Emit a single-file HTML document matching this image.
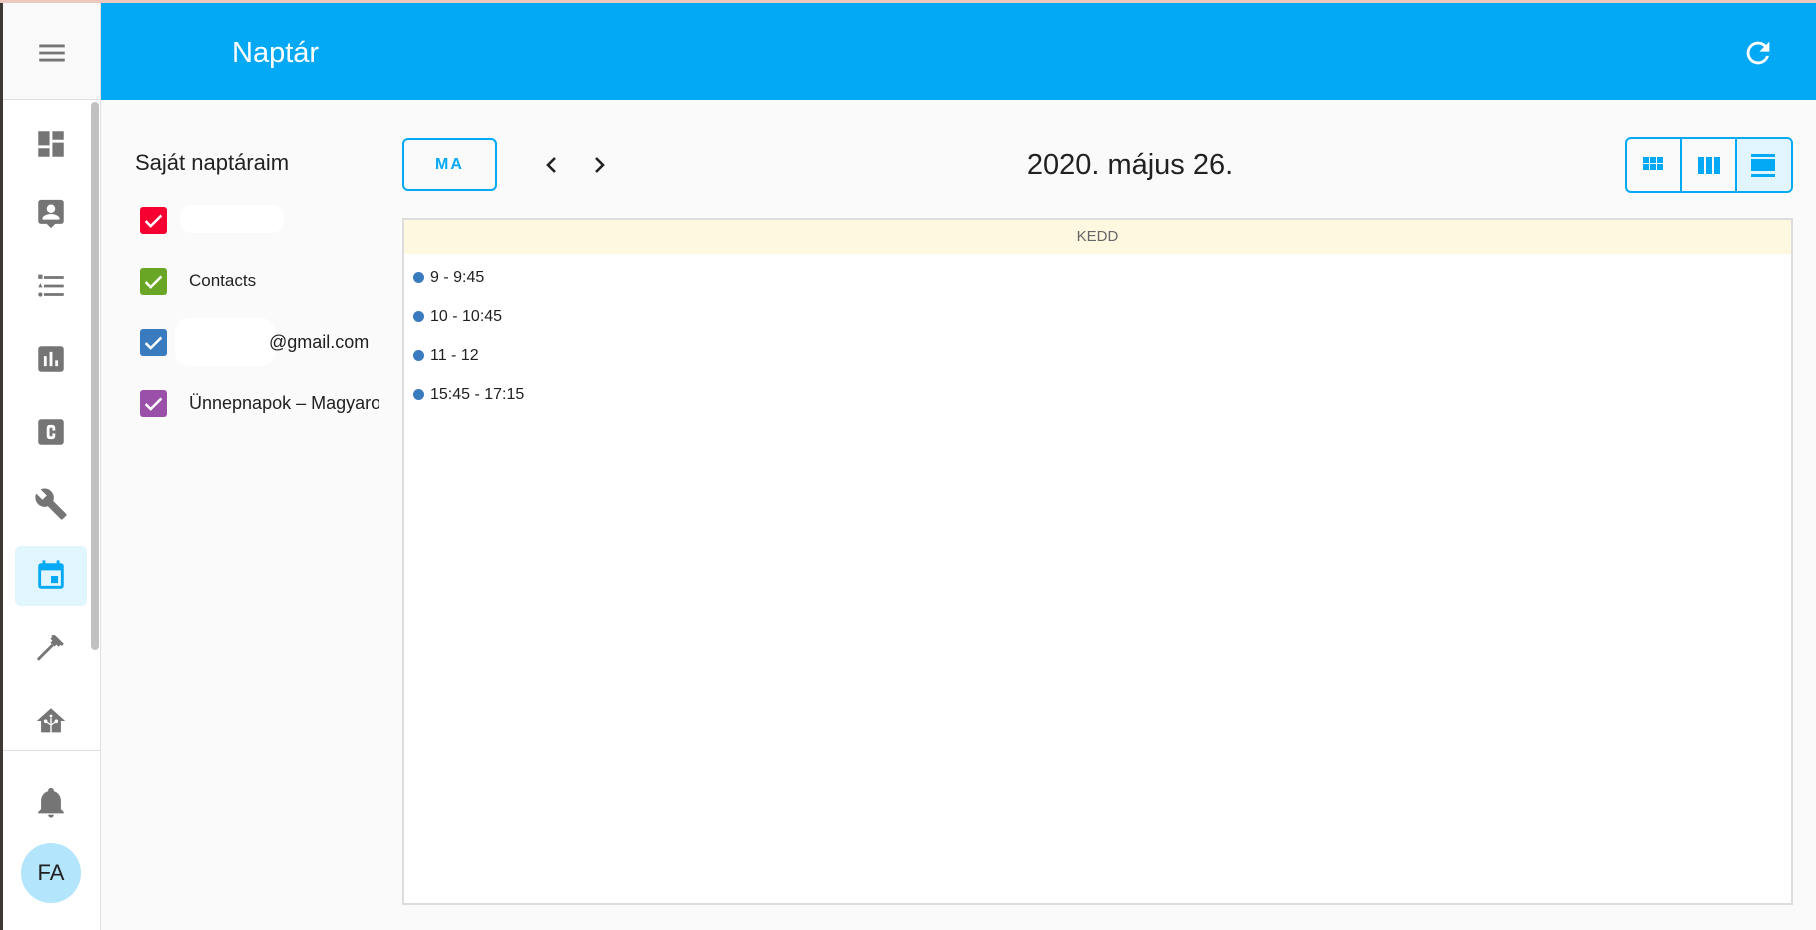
<!DOCTYPE html>
<html><head><meta charset="utf-8"><style>
*{margin:0;padding:0;box-sizing:border-box}
body{width:1816px;height:930px;overflow:hidden;background:#fafafa;font-family:"Liberation Sans",sans-serif;position:relative;color:#212121}
.a{position:absolute}
svg.i{position:absolute;width:34px;height:34px;fill:#757575}
.cb{position:absolute;left:140px;width:27px;height:27px;border-radius:3px}
.cb svg{width:27px;height:27px}
.lbl{position:absolute;left:189px;font-size:17px;color:#212121}
.ev{position:absolute;left:413px;font-size:16px;color:#212121}
.ev:before{content:"";display:inline-block;width:11px;height:11px;border-radius:50%;background:#3a7bbf;margin-right:6px;vertical-align:-1px}
</style></head><body>
<div class="a" style="left:0;top:0;width:1816px;height:3px;background:#ecc8bf"></div>
<div class="a" style="left:0;top:3px;width:3px;height:927px;background:#3d3a36"></div>
<!-- sidebar -->
<div class="a" style="left:3px;top:3px;width:98px;height:927px;background:#fff;border-right:1px solid #e0e0e0"></div>
<div class="a" style="left:3px;top:3px;width:97px;height:97px;background:#f9f9f9;border-bottom:1px solid #e0e0e0"></div>
<div class="a" style="left:91px;top:102px;width:8px;height:548px;background:#c1c1c1;border-radius:4px"></div>
<svg class="i" style="left:35px;top:36px" viewBox="0 0 24 24"><path d="M3 6h18v2H3zm0 5h18v2H3zm0 5h18v2H3z"/></svg>
<svg class="i" style="left:34px;top:127px" viewBox="0 0 24 24"><path d="M13 3v6h8V3m-8 18h8V11h-8M3 21h8v-6H3m0-2h8V3H3z"/></svg>
<svg class="i" style="left:34px;top:197px" viewBox="0 0 24 24"><path d="M19 2H5a2 2 0 0 0-2 2v13a2 2 0 0 0 2 2h4l3 3 3-3h4a2 2 0 0 0 2-2V4a2 2 0 0 0-2-2m-7 3.3a3 3 0 1 1 0 6 3 3 0 0 1 0-6M18 16H6v-.9c0-2 4-3.1 6-3.1s6 1.1 6 3.1z"/></svg>
<svg class="i" style="left:34px;top:269px" viewBox="0 0 24 24"><path d="M7 5h14v2H7zm0 6h14v2H7zm0 6h14v2H7zM3 4h3v3H3zm1.5 6L6 13H3zM4.5 16.5a1.5 1.5 0 1 1 0 3 1.5 1.5 0 0 1 0-3"/></svg>
<svg class="i" style="left:34px;top:342px" viewBox="0 0 24 24"><path d="M19 3H5a2 2 0 0 0-2 2v14a2 2 0 0 0 2 2h14a2 2 0 0 0 2-2V5a2 2 0 0 0-2-2M9 17H7v-7h2zm4 0h-2V7h2zm4 0h-2v-4h2z"/></svg>
<svg class="i" style="left:34px;top:415px" viewBox="0 0 24 24"><path d="M19 3H5a2 2 0 0 0-2 2v14a2 2 0 0 0 2 2h14a2 2 0 0 0 2-2V5a2 2 0 0 0-2-2m-4 8h-2V9h-2v6h2v-2h2v2a2 2 0 0 1-2 2h-2a2 2 0 0 1-2-2V9a2 2 0 0 1 2-2h2a2 2 0 0 1 2 2z"/></svg>
<svg class="i" style="left:34px;top:487px" viewBox="0 0 24 24"><path d="M22.7 19l-9.1-9.1c.9-2.3.4-5-1.5-6.9-2-2-5-2.4-7.4-1.3L9 6 6 9 1.6 4.7C.4 7.1.9 10.1 2.9 12.1c1.9 1.9 4.6 2.4 6.9 1.5l9.1 9.1c.4.4 1 .4 1.4 0l2.3-2.3c.5-.4.5-1.1.1-1.4z"/></svg>
<div class="a" style="left:15px;top:546px;width:72px;height:60px;background:#e1f5fe;border-radius:6px"></div>
<svg class="i" style="left:34px;top:559px;fill:#03a9f4" viewBox="0 0 24 24"><path d="M19 19H5V8h14m-3-7v2H8V1H6v2H5a2 2 0 0 0-2 2v14a2 2 0 0 0 2 2h14a2 2 0 0 0 2-2V5a2 2 0 0 0-2-2h-1V1m-1 11h-5v5h5z"/></svg>
<svg class="i" style="left:34px;top:631px" viewBox="0 0 24 24"><path d="M2 19.6l1.4 1.4 10.4-10.4-1.4-1.4zM13 4l-1.4 1.4 1.4 1.4-1.4 1.4 2.8 2.8 1.4-1.4 1.4 1.4L19 9.8l.7.7 1.4-1.4-5.6-5.6c-1-1-2.6-.9-3.5 0z"/></svg>
<svg class="i" style="left:34px;top:704px" viewBox="0 0 24 24"><path d="M12 3L2 12h3v8h14v-8h3zm0 4.5a1 1 0 1 1 0 2 1 1 0 0 1 0-2m-.5 2.5h1v4l2-1.5a1.3 1.3 0 1 1 .6.8L12.5 15v5h-1v-5L8.9 13.3a1.3 1.3 0 1 1 .6-.8l2 1.5z"/></svg>
<div class="a" style="left:3px;top:750px;width:97px;height:1px;background:#e0e0e0"></div>
<svg class="i" style="left:34px;top:785px" viewBox="0 0 24 24"><path d="M21 19v1H3v-1l2-2v-6c0-3.1 2-5.8 5-6.7V4a2 2 0 0 1 4 0v.3c3 .9 5 3.6 5 6.7v6zm-7 2a2 2 0 0 1-4 0"/></svg>
<div class="a" style="left:21px;top:843px;width:60px;height:60px;border-radius:50%;background:#b3e5fc;text-align:center;line-height:60px;font-size:22px;color:#212121">FA</div>
<!-- header -->
<div class="a" style="left:101px;top:3px;width:1715px;height:97px;background:#03a9f4"></div>
<div class="a" style="left:232px;top:37px;font-size:29px;color:#fff">Naptár</div>
<svg class="i" style="left:1741px;top:36px;fill:#fff" viewBox="0 0 24 24"><path d="M17.65 6.35A7.96 7.96 0 0 0 12 4a8 8 0 1 0 7.73 10h-2.08A6 6 0 1 1 12 6c1.66 0 3.14.69 4.22 1.78L13 11h7V4z"/></svg>
<!-- calendars list -->
<div class="a" style="left:135px;top:150px;font-size:22px;color:#212121">Saját naptáraim</div>
<div class="cb" style="top:207px;background:#f50031"><svg viewBox="0 0 24 24"><path d="M5 12.5l4.5 4.5L19 7.5" stroke="#fff" stroke-width="2.2" fill="none"/></svg></div>
<div class="a" style="left:180px;top:205px;width:104px;height:28px;background:#fff;border-radius:12px"></div>
<div class="cb" style="top:268px;background:#6aa625"><svg viewBox="0 0 24 24"><path d="M5 12.5l4.5 4.5L19 7.5" stroke="#fff" stroke-width="2.2" fill="none"/></svg></div>
<div class="lbl" style="top:271px">Contacts</div>
<div class="cb" style="top:329px;background:#3a7bbf"><svg viewBox="0 0 24 24"><path d="M5 12.5l4.5 4.5L19 7.5" stroke="#fff" stroke-width="2.2" fill="none"/></svg></div>
<div class="a" style="left:175px;top:318px;width:100px;height:48px;background:#fff;border-radius:14px"></div>
<div class="lbl" style="top:332px;left:269px;font-size:18px">@gmail.com</div>
<div class="cb" style="top:390px;background:#9a4fa8"><svg viewBox="0 0 24 24"><path d="M5 12.5l4.5 4.5L19 7.5" stroke="#fff" stroke-width="2.2" fill="none"/></svg></div>
<div class="lbl" style="top:393px;width:190px;overflow:hidden;white-space:nowrap;font-size:18px">Ünnepnapok – Magyarország</div>
<!-- toolbar -->
<div class="a" style="left:402px;top:138px;width:95px;height:53px;border:2px solid #03a9f4;border-radius:6px;color:#03a9f4;font-size:16px;font-weight:bold;letter-spacing:2px;text-align:center;line-height:49px">MA</div>
<svg class="a" style="left:540px;top:153px;width:24px;height:24px" viewBox="0 0 24 24"><path d="M15 5l-7 7 7 7" stroke="#212121" stroke-width="2.6" fill="none"/></svg>
<svg class="a" style="left:587px;top:153px;width:24px;height:24px" viewBox="0 0 24 24"><path d="M9 5l7 7-7 7" stroke="#212121" stroke-width="2.6" fill="none"/></svg>
<div class="a" style="left:900px;top:149px;width:460px;text-align:center;font-size:29px;color:#212121">2020. május 26.</div>
<div class="a" style="left:1625px;top:137px;width:168px;height:56px;border:2px solid #03a9f4;border-radius:6px;overflow:hidden;display:flex">
<div style="width:55px;border-right:2px solid #03a9f4;position:relative"><svg style="position:absolute;left:16px;top:16px;width:22px;height:22px" viewBox="0 0 22 22" fill="#03a9f4"><rect x="0" y="2" width="6" height="6"/><rect x="7" y="2" width="6" height="6"/><rect x="14" y="2" width="6" height="6"/><rect x="0" y="9" width="6" height="6"/><rect x="7" y="9" width="6" height="6"/><rect x="14" y="9" width="6" height="6"/></svg></div>
<div style="width:55px;border-right:2px solid #03a9f4;position:relative"><svg style="position:absolute;left:16px;top:16px;width:24px;height:22px" viewBox="0 0 24 22" fill="#03a9f4"><rect x="0" y="2" width="6" height="17"/><rect x="8" y="2" width="6" height="17"/><rect x="16" y="2" width="6" height="17"/></svg></div>
<div style="flex:1;background:#e1f5fe;position:relative"><svg style="position:absolute;left:14px;top:15px;width:26px;height:24px" viewBox="0 0 26 24" fill="#03a9f4"><rect x="0" y="0" width="24" height="3"/><rect x="0" y="5" width="24" height="12"/><rect x="0" y="20" width="24" height="3"/></svg></div>
</div>
<!-- calendar box -->
<div class="a" style="left:402px;top:218px;width:1391px;height:687px;background:#fff;border:2px solid #ddd"></div>
<div class="a" style="left:404px;top:220px;width:1387px;height:34px;background:#fff8e1;text-align:center;line-height:34px;font-size:15px;color:#666">KEDD</div>
<div class="ev" style="top:269px">9 - 9:45</div>
<div class="ev" style="top:308px">10 - 10:45</div>
<div class="ev" style="top:347px">11 - 12</div>
<div class="ev" style="top:386px">15:45 - 17:15</div>
</body></html>
